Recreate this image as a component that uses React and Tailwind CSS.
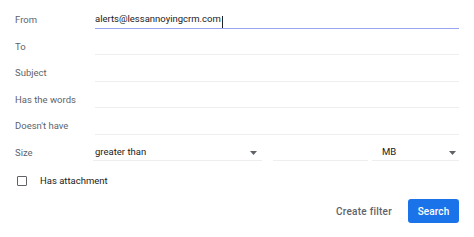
import React from 'react';

function Row({ label, value, focused }) {
  return (
    <div className="flex items-end h-[26.5px]">
      <div className="w-[80px] pb-[1px] text-[#5f6368]">{label}</div>
      <div
        className={`flex-1 h-full flex items-end pb-[1px] border-b ${
          focused ? 'border-[#9aa3f2]' : 'border-[#eceef0]'
        }`}
      >
        <span className="text-[#202124]">{value}</span>
        {focused && <span className="inline-block w-px h-[12px] bg-[#202124] ml-[1px] mb-[-1px]" />}
      </div>
    </div>
  );
}

function Caret() {
  return (
    <svg width="7" height="4" viewBox="0 0 7 4" className="mb-[4px]">
      <path d="M0 0h7L3.5 4z" fill="#5f6368" />
    </svg>
  );
}

export default function App() {
  const rows = [
    { label: 'From', value: 'alerts@lessannoyingcrm.com', focused: true },
    { label: 'To' },
    { label: 'Subject' },
    { label: 'Has the words' },
    { label: "Doesn't have" },
  ];

  return (
    <div
      className="w-[474px] h-[237px] bg-white px-[15px] pt-[2px] text-[9.5px]"
      style={{ fontFamily: 'Roboto, "Liberation Sans", sans-serif' }}
    >
      {rows.map((r) => (
        <Row key={r.label} {...r} />
      ))}

      <div className="flex items-end h-[26.5px]">
        <div className="w-[78px] pb-[1px] text-[#5f6368]">Size</div>
        <div className="w-[169px] h-full flex items-end justify-between pl-[2px] pr-[5px] pb-[1px] border-b border-[#eceef0] text-[#202124]">
          <span>greater than</span>
          <Caret />
        </div>
        <div className="w-[95px] ml-[11px] h-full border-b border-[#eceef0]" />
        <div className="flex-1 ml-[4px] h-full flex items-end justify-between pl-[10px] pr-[3px] pb-[1px] border-b border-[#eceef0] text-[#202124]">
          <span>MB</span>
          <Caret />
        </div>
      </div>

      <div className="flex items-center mt-[14px] h-[12px]">
        <div className="w-[10px] h-[10px] ml-[2px] border-[1.5px] border-[#5f6368] rounded-[1px]" />
        <span className="ml-[13px] text-[#202124]">Has attachment</span>
      </div>

      <div className="flex justify-end items-center mt-[12px]">
        <span className="text-[#5f6368] text-[10px] tracking-[0.25px] font-medium mr-[16px]">Create filter</span>
        <button className="w-[51px] h-[24px] rounded-[3px] bg-[#1a73e8] text-white text-[10px] tracking-[0.1px] font-medium">
          Search
        </button>
      </div>
    </div>
  );
}
